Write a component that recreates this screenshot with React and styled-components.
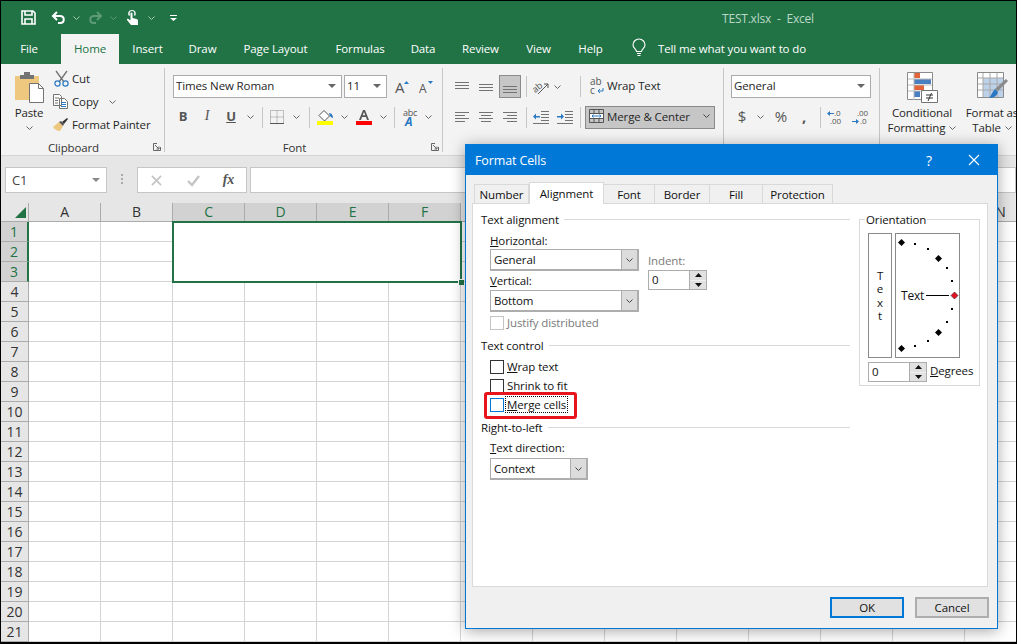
import React from "react";
import styled, { createGlobalStyle } from "styled-components";

const UI = `"Open Sans", "Noto Sans", "Liberation Sans", sans-serif`;
const GREEN = "#217346";
const BLUE = "#0078d7";

const Global = createGlobalStyle`
  html, body { margin: 0; padding: 0; background: #fff; }
  * { box-sizing: border-box; }
  svg { overflow: visible; }
`;

const Root = styled.div`
  position: relative;
  width: 1017px;
  height: 644px;
  overflow: hidden;
  border: 1px solid #000;
  border-bottom-width: 2px;
  font-family: ${UI};
  font-size: 11.5px;
  letter-spacing: -0.12px;
  color: #262626;
  background: #fff;
`;

/* title bar */
const TitleBar = styled.div`
  display: flex;
  align-items: center;
  height: 33px;
  padding-left: 20px;
  background: ${GREEN};
`;
const Qat = styled.div`
  display: flex;
  align-items: center;
  width: 701px;
  flex: none;
`;
const DocTitle = styled.div`
  margin-top: 1px;
  color: #bcd8c6;
  font-size: 12px;
  letter-spacing: -0.2px;
  white-space: pre;
`;
const Slot = styled.div`
  display: flex;
  align-items: center;
  justify-content: center;
  flex: none;
  width: ${(p) => p.$w}px;
  height: ${(p) => p.$h || 24}px;
  margin-left: ${(p) => p.$ml || 0}px;
`;

/* tabs */
const TabBar = styled.div`
  display: flex;
  align-items: stretch;
  height: 30px;
  background: ${GREEN};
`;
const Tab = styled.div`
  display: flex;
  align-items: center;
  justify-content: center;
  flex: none;
  width: ${(p) => p.$w}px;
  padding: 0 ${(p) => p.$pr || 0}px 2px 0;
  color: ${(p) => (p.$active ? GREEN : "#fff")};
  background: ${(p) => (p.$active ? "#f3f3f3" : "transparent")};
  white-space: nowrap;
`;
const TellMe = styled.div`
  display: flex;
  align-items: center;
  margin-left: 15px;
  padding-bottom: 2px;
  gap: 12px;
  color: #fff;
`;

/* ribbon */
const Ribbon = styled.div`
  display: flex;
  height: 92px;
  padding-top: 4px;
  background: #f3f3f3;
  border-bottom: 1px solid #d4d4d4;
`;
const Group = styled.div`
  display: flex;
  flex-direction: column;
  flex: none;
  width: ${(p) => p.$w}px;
  height: 84px;
  border-right: ${(p) => (p.$last ? "none" : "1px solid #c6c6c6")};
`;
const GroupBody = styled.div`
  display: flex;
  flex-direction: ${(p) => (p.$row ? "row" : "column")};
  height: 72px;
  padding: ${(p) => (p.$pad ? `7px 0 0 ${p.$pad}px` : "0")};
`;
const GroupLabel = styled.div`
  display: flex;
  align-items: center;
  height: 16px;
  margin: -1px 0 -3px;
`;
const LabelText = styled.div`
  flex: 1;
  text-align: center;
  color: #333;
`;
const Launcher = styled.div`
  display: flex;
  justify-content: flex-end;
  width: 18px;
  padding-right: 3px;
`;
const Row = styled.div`
  display: flex;
  align-items: center;
  height: ${(p) => p.$h || 24}px;
  margin-top: ${(p) => p.$mt || 0}px;
`;
const PasteCol = styled.div`
  display: flex;
  flex-direction: column;
  align-items: center;
  width: 56px;
  margin-right: -4px;
  padding-top: 4px;
  flex: none;
`;
const PasteText = styled.div`
  margin-top: 1px;
  line-height: 18px;
`;
const ClipList = styled.div`
  display: flex;
  flex-direction: column;
  margin-top: -1px;
`;
const ClipItem = styled.div`
  display: flex;
  align-items: center;
  gap: 3px;
  height: 23px;
  white-space: nowrap;
`;
const ClipIcon = styled.div`
  display: flex;
  justify-content: center;
  width: 16px;
  flex: none;
`;
const Combo = styled.div`
  display: flex;
  align-items: center;
  justify-content: space-between;
  flex: none;
  width: ${(p) => p.$w}px;
  height: 23px;
  margin-left: ${(p) => p.$ml || 0}px;
  padding: 0 5px 2px 2px;
  background: #fff;
  border: 1px solid #ababab;
  white-space: nowrap;
`;
const Caret = styled.div`
  width: 0;
  height: 0;
  border-left: 4px solid transparent;
  border-right: 4px solid transparent;
  border-top: 4px solid ${(p) => p.$c || "#666"};
`;
const VSep = styled.div`
  flex: none;
  width: 1px;
  height: 21px;
  margin-left: ${(p) => p.$ml || 0}px;
  background: #c6c6c6;
`;
const ActiveCell = styled(Slot)`
  height: 23px;
  background: #c6c6c6;
  border: 1px solid #8a8a8a;
`;
const WrapBtn = styled.div`
  display: flex;
  align-items: center;
  gap: 2px;
  margin-left: 9px;
  padding-bottom: 2px;
  white-space: nowrap;
`;
const MergeBtn = styled.div`
  display: flex;
  align-items: center;
  gap: 3px;
  width: 130px;
  height: 23px;
  margin-left: 4px;
  padding: 0 0 2px 3px;
  background: #c6c6c6;
  border: 1px solid #8a8a8a;
  white-space: nowrap;
`;
const StyleBtn = styled.div`
  display: flex;
  flex-direction: column;
  align-items: center;
  flex: none;
  width: ${(p) => p.$w}px;
  padding-top: 4px;
  line-height: 15px;
  white-space: nowrap;
`;
const StyleIcon = styled.div`
  height: 33px;
`;
const StyleLine = styled.div`
  display: flex;
  align-items: center;
  gap: 4px;
`;

/* formula bar */
const FormulaBar = styled.div`
  display: flex;
  align-items: flex-start;
  height: 47px;
  padding: 11px 0 0 4px;
  background: #e6e6e6;
`;
const NameBox = styled.div`
  display: flex;
  align-items: center;
  justify-content: space-between;
  flex: none;
  width: 102px;
  height: 26px;
  padding: 0 6px;
  background: #fff;
  border: 1px solid #c6c6c6;
  font-size: 13px;
  color: #444;
`;
const Grip = styled.div`
  flex: none;
  width: 2px;
  height: 12px;
  margin: 7px 14px 0 14px;
  background-image: linear-gradient(#aaa 50%, transparent 50%);
  background-size: 2px 4px;
`;
const FxBox = styled.div`
  display: flex;
  align-items: center;
  flex: none;
  width: 110px;
  height: 26px;
  background: #fff;
  border: 1px solid #c6c6c6;
`;
const FormulaInput = styled.div`
  flex: 1;
  height: 26px;
  margin-left: 3px;
  background: #fff;
  border: 1px solid #c6c6c6;
`;

/* sheet */
const Sheet = styled.div`
  position: relative;
  background: #fff;
`;
const HeadRow = styled.div`
  display: flex;
  height: 19px;
  background: #e6e6e6;
  border-bottom: 1px solid #ababab;
`;
const Corner = styled.div`
  display: flex;
  justify-content: flex-end;
  align-items: flex-end;
  flex: none;
  width: 28px;
  padding: 0 2px 3px 0;
  border-right: 1px solid #ababab;
`;
const ColHead = styled.div`
  flex: none;
  width: 72px;
  line-height: 18px;
  text-align: center;
  font-size: 14px;
  color: ${(p) => (p.$on ? GREEN : "#333")};
  background: ${(p) => (p.$on ? "#d2d2d2" : "transparent")};
  border-right: 1px solid #ababab;
`;
const SheetRow = styled.div`
  display: flex;
  height: 20px;
`;
const RowHead = styled.div`
  flex: none;
  width: 28px;
  line-height: 19px;
  text-align: center;
  font-size: 14px;
  color: ${(p) => (p.$on ? GREEN : "#333")};
  background: ${(p) => (p.$on ? "#d2d2d2" : "#e6e6e6")};
  border-right: ${(p) => (p.$on ? `2px solid ${GREEN}` : "1px solid #ababab")};
  border-bottom: 1px solid #ababab;
`;
const Cell = styled.div`
  flex: none;
  width: 72px;
  border-right: 1px solid #d4d4d4;
  border-bottom: 1px solid #d4d4d4;
`;
const Selection = styled.div`
  position: absolute;
  left: 171px;
  top: 18px;
  width: 290px;
  height: 62px;
  background: #fff;
  border: 2px solid ${GREEN};
`;
const Handle = styled.div`
  position: absolute;
  right: -4px;
  bottom: -4px;
  width: 6px;
  height: 6px;
  background: ${GREEN};
  border: 1px solid #fff;
  border-width: 1px 0 0 1px;
`;

/* dialog */
const Dialog = styled.div`
  position: absolute;
  left: 464px;
  top: 143px;
  width: 533px;
  height: 485px;
  display: flex;
  flex-direction: column;
  background: #f0f0f0;
  border: 1px solid ${BLUE};
  box-shadow: 0 2px 14px rgba(0, 0, 0, 0.35);
  color: #111;
`;
const DialogTitle = styled.div`
  display: flex;
  align-items: center;
  flex: none;
  height: 30px;
  padding: 0 17px 0 9px;
  background: ${BLUE};
  color: #fff;
  font-size: 12.5px;
`;
const HelpMark = styled.div`
  margin: 0 36px 0 auto;
  font-size: 14px;
`;
const TabStrip = styled.div`
  display: flex;
  align-items: flex-end;
  height: 22px;
  margin: 7px 0 0 8px;
  position: relative;
  z-index: 1;
`;
const DTab = styled.div`
  display: flex;
  align-items: center;
  justify-content: center;
  flex: none;
  width: ${(p) => p.$w}px;
  height: ${(p) => (p.$active ? 22 : 20)}px;
  background: ${(p) => (p.$active ? "#fff" : "#f0f0f0")};
  border: 1px solid #d9d9d9;
  border-left-width: ${(p) => (p.$first || p.$active ? 1 : 0)}px;
  border-bottom-width: ${(p) => (p.$active ? 0 : 1)}px;
`;
const Panel = styled.div`
  display: flex;
  flex: none;
  width: 516px;
  height: 384px;
  margin: -1px 0 0 6px;
  padding: 8px 0 0 8px;
  background: #fff;
  border: 1px solid #d9d9d9;
`;
const LeftCol = styled.div`
  flex: none;
  width: 369px;
`;
const Heading = styled.div`
  display: flex;
  align-items: center;
  gap: 5px;
  height: 16px;
  padding-bottom: 2px;
  margin-top: ${(p) => p.$mt || 0}px;
  white-space: nowrap;
  &::after {
    content: "";
    flex: 1;
    height: 1px;
    background: #d9d9d9;
  }
`;
const Indented = styled.div`
  padding-left: 9px;
`;
const FieldLabel = styled.div`
  height: 16px;
  line-height: 16px;
  margin-top: ${(p) => p.$mt || 0}px;
  color: ${(p) => (p.$muted ? "#7a7a7a" : "inherit")};
`;
const FieldRow = styled.div`
  display: flex;
  margin-top: 5px;
`;
const SelectCol = styled.div`
  flex: none;
  width: 149px;
`;
const IndentCol = styled.div`
  margin-left: 9px;
  padding-top: 20px;
`;
const Select = styled.div`
  display: flex;
  justify-content: space-between;
  width: ${(p) => p.$w}px;
  height: 22px;
  margin-top: ${(p) => p.$mt || 0}px;
  padding-left: 3px;
  line-height: 19px;
  background: #fff;
  border: 1px solid #adadad;
  border-width: 1px 2px 2px 1px;
`;
const SelectBtn = styled.div`
  display: flex;
  align-items: center;
  justify-content: center;
  width: 16px;
  background: #dcdcdc;
  border-left: 1px solid #adadad;
`;
const Spinner = styled.div`
  display: flex;
  justify-content: space-between;
  flex: none;
  width: ${(p) => p.$w || 59}px;
  height: 20px;
  margin-top: 1px;
  padding-left: 3px;
  line-height: 18px;
  background: #fff;
  border: 1px solid #adadad;
`;
const SpinBtns = styled.div`
  display: flex;
  flex-direction: column;
  width: 17px;
  background: #e1e1e1;
  border-left: 1px solid #adadad;
`;
const SpinBtn = styled.div`
  display: flex;
  align-items: center;
  justify-content: center;
  flex: 1;
  & + & {
    border-top: 1px solid #f0f0f0;
  }
`;
const CheckRow = styled.div`
  position: relative;
  display: flex;
  align-items: center;
  gap: 2px;
  height: 16px;
  margin-top: ${(p) => p.$mt || 0}px;
  color: ${(p) => (p.$muted ? "#7a7a7a" : "inherit")};
`;
const Box = styled.div`
  flex: none;
  width: 14px;
  height: 14px;
  background: #fff;
  border: 1px solid ${(p) => p.$c || "#333"};
`;
const CheckText = styled.div`
  margin-top: -2px;
  padding: 0 1px;
  outline: ${(p) => (p.$focus ? "1px dotted #111" : "none")};
`;
const RedMark = styled.div`
  position: absolute;
  left: -6px;
  top: -5px;
  width: 93px;
  height: 27px;
  border: 3px solid #e8141c;
  border-radius: 3px;
`;
const OrientGroup = styled.div`
  flex: none;
  width: 121px;
  height: 167px;
  margin: 7px 0 0 9px;
  padding: 0 8px;
  border: 1px solid #d9d9d9;
`;
const Legend = styled.div`
  width: fit-content;
  height: 14px;
  margin: -7px 0 0 -3px;
  padding: 0 1px;
  line-height: 14px;
  background: #fff;
`;
const OrientBoxes = styled.div`
  display: flex;
  gap: 3px;
  margin-top: 6px;
`;
const TextBox = styled.div`
  display: flex;
  flex-direction: column;
  align-items: center;
  justify-content: center;
  width: 24px;
  height: 125px;
  line-height: 13.4px;
  border: 1px solid #8a8a8a;
`;
const ArcBox = styled.div`
  width: 65px;
  height: 125px;
  border: 1px solid #8a8a8a;
`;
const DegreeRow = styled.div`
  display: flex;
  align-items: center;
  gap: 3px;
  margin-top: 3px;
  white-space: nowrap;
`;
const DegreeText = styled.span`
  margin-top: -2px;
`;
const Footer = styled.div`
  display: flex;
  justify-content: flex-end;
  gap: 11px;
  margin-top: 10px;
  padding-right: 8px;
`;
const DlgButton = styled.div`
  display: flex;
  align-items: center;
  justify-content: center;
  width: 74px;
  height: 21px;
  background: #e1e1e1;
  border: 2px solid ${(p) => (p.$primary ? BLUE : "#adadad")};
`;

/* icons */
const Chev = ({ c = "#666" }) => (
  <svg width="7" height="4" viewBox="0 0 7 4"><path d="M.5.5l3 3 3-3" fill="none" stroke={c} /></svg>
);
const Up = () => (
  <svg width="7" height="4" viewBox="0 0 7 4"><path d="M3.5 0L7 4H0z" fill="#111" /></svg>
);
const Down = () => (
  <svg width="7" height="4" viewBox="0 0 7 4"><path d="M3.5 4L7 0H0z" fill="#111" /></svg>
);
const SaveIcon = () => (
  <svg width="15" height="15" viewBox="0 0 15 15" fill="none" stroke="#fff" strokeWidth="1.6">
    <path d="M1 1h11l2 2v11H1z" />
    <path d="M4 1v4h7V1" />
    <path d="M4 14v-5h7v5" />
  </svg>
);
const UndoIcon = ({ c = "#fff", flip }) => (
  <svg width="15" height="13" viewBox="0 0 15 13" fill="none" stroke={c} strokeWidth="2" style={flip ? { transform: "scaleX(-1)" } : undefined}>
    <path d="M6 1L2 5l4 4" />
    <path d="M2 5h7c5 0 5 7 0 7H7" />
  </svg>
);
const TouchIcon = () => (
  <svg width="13" height="17" viewBox="0 0 13 17" fill="#fff">
    <path d="M3 7c-2-3 0-6 3-6s5 3 3 6l-1-1c1-2 0-4-2-4S3 4 4 6z" />
    <path d="M4.500 4.500a1 1 0 012 0V9l4 1c1 .3 1.500 1 1.500 2v4H5L1 11c-.5-.8.5-1.800 1.500-1l2 1.500z" />
  </svg>
);
const BulbIcon = () => (
  <svg width="14" height="18" viewBox="0 0 14 18" fill="none" stroke="#fff" strokeWidth="1.100">
    <path d="M4.500 12.500C4.300 10 1 9 1 6a6 6 0 0112 0c0 3-3.300 4-3.500 6.500z" />
    <path d="M5 14.500h4M5.500 16.500h3" />
  </svg>
);
const PasteIcon = () => (
  <svg width="29" height="31" viewBox="0 0 29 31">
    <path d="M0 4h24v24H0z" fill="#edc87e" />
    <path d="M5 3h4V0h6v3h4v4H5z" fill="#737373" />
    <path d="M14.500 11.500h9l5 5v14h-14z" fill="#fff" stroke="#737373" />
    <path d="M23.500 11.500v5h5" fill="none" stroke="#737373" />
  </svg>
);
const CutIcon = () => (
  <svg width="15" height="16" viewBox="0 0 15 16" fill="none">
    <path d="M2 0l8 11M13 0L5 11" stroke="#737373" strokeWidth="1.300" />
    <circle cx="3.500" cy="12.500" r="2.600" stroke="#2b79c2" strokeWidth="1.200" />
    <circle cx="11.500" cy="12.500" r="2.600" stroke="#2b79c2" strokeWidth="1.200" />
  </svg>
);
const CopyIcon = () => (
  <svg width="16" height="15" viewBox="0 0 16 15" fill="none" stroke="#737373">
    <path d="M.5.500h6l2 2v9H.5zM6.500 4.500h5l3 3v7h-8z" fill="#fff" />
    <path d="M2 4h4M2 6.500h3M2 9h3" />
    <path d="M8 8.500h5M8 10.500h5M8 12.500h5" stroke="#2b79c2" />
  </svg>
);
const PainterIcon = () => (
  <svg width="16" height="15" viewBox="0 0 16 15">
    <path d="M6 5l4 4-3 5c-3 0-6-2-7-4z" fill="#edc87e" />
    <path d="M6 5l2-1 3 3-1 2z" fill="#555" />
    <path d="M9 5l5-4 1 1-4 5z" fill="#333" />
  </svg>
);
const LauncherIcon = () => (
  <svg width="8" height="8" viewBox="0 0 8 8" fill="none" stroke="#666">
    <path d="M7.500 4v3.500H.5V.5H4" />
    <path d="M2 2l4 4M6 3.500V6H3.500" />
  </svg>
);
const GrowA = ({ small }) => (
  <svg width="14" height="14" viewBox="0 0 14 14">
    <text x="0" y={13} fontFamily={UI} fontSize={small ? 12 : 15} fill="#555">A</text>
    {small ? <path d="M9 1h5l-2.500 3z" fill="#2b79c2" /> : <path d="M9 4h5l-2.500-3z" fill="#2b79c2" />}
  </svg>
);
const BordersIcon = () => (
  <svg width="14" height="14" viewBox="0 0 14 14" fill="none">
    <path d="M.5.500h13v13H.5zM7 .5v13M.5 7h13" stroke="#8a8a8a" strokeDasharray="1 1" />
    <path d="M0 13.500h14" stroke="#555" />
  </svg>
);
const FillIcon = () => (
  <svg width="17" height="15" viewBox="0 0 17 15">
    <path d="M7 .5l5.500 5.500-5 5L2 5.500z" fill="#fff" stroke="#555" />
    <path d="M12 3c3 0 4 3 4 5-1 0-2-1-3-2z" fill="#2b79c2" />
    <path d="M0 11h16v4H0z" fill="#ffff00" />
  </svg>
);
const ColorA = () => (
  <svg width="16" height="15" viewBox="0 0 16 15">
    <path d="M3 10L7 0h2l4 10h-2l-1-3H6l-1 3zM6.700 5.300h2.600L8 2z" fill="#555" />
    <path d="M0 11h16v4H0z" fill="#ff0000" />
  </svg>
);
const AbcIcon = () => (
  <svg width="14" height="17" viewBox="0 0 14 17">
    <text x="0" y="7" fontFamily={UI} fontSize="9" letterSpacing="-.3" fill="#555">abc</text>
    <text x="2" y="17" fontFamily={UI} fontSize="12" fontWeight="700" fontStyle="italic" fill="#2b79c2">A</text>
  </svg>
);
const Lines = ({ rows, w = 14 }) => (
  <svg width={w} height="12" viewBox={`0 0 ${w} 12`} stroke="#737373">
    {rows.map(([y, x1, x2]) => (
      <path key={y} d={`M${x1} ${y + 0.5}H${x2}`} />
    ))}
  </svg>
);
const OrientIcon = () => (
  <svg width="17" height="17" viewBox="0 0 17 17" fill="none">
    <text x="0" y="12" fontFamily={UI} fontSize="9" fill="#555" transform="rotate(-40 6 9)">ab</text>
    <path d="M6 16L16 6M16 6h-4M16 6v4" stroke="#555" />
  </svg>
);
const WrapIcon = () => (
  <svg width="15" height="18" viewBox="0 0 15 18" fill="none">
    <text x="0" y="8" fontFamily={UI} fontSize="10" fill="#555">ab</text>
    <text x="0" y="17" fontFamily={UI} fontSize="10" fill="#555">c</text>
    <path d="M13 11v3H8M10 12l-2 2 2 2" stroke="#2b79c2" />
  </svg>
);
const IndentIcon = ({ right }) => (
  <svg width="16" height="13" viewBox="0 0 16 13" fill="none">
    <path d="M8 .5h8M8 3.500h8M8 6.500h8M8 9.500h8M0 12.500h16" stroke="#737373" />
    <path d={right ? "M0 5h4V2.500L7 5.500l-3 3V6.500H0z" : "M7 5H3V2.500L0 5.500l3 3V6.500h4z"} fill="#2b79c2" />
  </svg>
);
const MergeIcon = () => (
  <svg width="15" height="14" viewBox="0 0 15 14" fill="none">
    <path d="M.5.500h14v13H.5zM.5 4.500h14M.5 9.500h14M5 .5v4M10 .5v4M5 9.500v4M10 9.500v4" stroke="#555" />
    <path d="M1 5h13v4H1z" fill="#fff" />
    <path d="M3 7h9M4.500 5.500L3 7l1.500 1.500M10.500 5.500L12 7l-1.500 1.500" stroke="#2b79c2" />
  </svg>
);
const DecimalIcon = ({ more }) => (
  <svg width="16" height="15" viewBox="0 0 16 15" fontFamily={UI} fontSize="8" fill="#555">
    {more ? (
      <>
        <text x="5" y="6">.00</text>
        <text x="8" y="14">.0</text>
        <path d="M0 11h4V9l3 2.500L4 14v-2H0z" fill="#2b79c2" />
      </>
    ) : (
      <>
        <text x="7" y="6">.0</text>
        <text x="3" y="14">.00</text>
        <path d="M7 3H3V1L0 3.500 3 6V4h4z" fill="#2b79c2" />
      </>
    )}
  </svg>
);
const CondIcon = () => (
  <svg width="31" height="31" viewBox="0 0 31 31">
    <path d="M.5.500h25v27H.5z" fill="#fff" stroke="#8a8a8a" />
    <path d="M7 1h6v5H7z" fill="#e0633a" />
    <path d="M7 7h17v5H7z" fill="#4a7fc0" />
    <path d="M7 13h10v5H7z" fill="#e0633a" />
    <path d="M7 19h6v6H7z" fill="#4a7fc0" />
    <path d="M7 1v27M1 7h24M1 13h24M1 19h24" stroke="#bbb" fill="none" />
    <path d="M14.500 18.500h16v12h-16z" fill="#fff" stroke="#737373" />
    <path d="M19 23h7M19 26h7M24.500 21l-3.500 8" stroke="#333" fill="none" />
  </svg>
);
const TableIcon = () => (
  <svg width="31" height="31" viewBox="0 0 31 31">
    <path d="M.5.500h26v25H.5z" fill="#fff" stroke="#8a8a8a" />
    <path d="M6 6h20v19H6z" fill="#bcd2ea" />
    <path d="M6 1v24M13 1v24M20 1v24M1 6h25M1 12h25M1 18h25" stroke="#a8a8a8" fill="none" />
    <path d="M29 7l2 2-10 10-3-2z" fill="#8a8a8a" />
    <path d="M18 17l3 3c-1 5-6 6-9 6 2-2 3-6 6-9z" fill="#2b79c2" />
  </svg>
);
const CloseX = ({ c = "#fff", s = 12, w = 1.2 }) => (
  <svg width={s} height={s} viewBox="0 0 12 12"><path d="M1 1l10 10M11 1L1 11" stroke={c} strokeWidth={w} fill="none" /></svg>
);
const CheckMark = () => (
  <svg width="13" height="11" viewBox="0 0 13 11"><path d="M1 6l4 4 7-9" stroke="#c4c4c4" strokeWidth="2.400" fill="none" /></svg>
);
const CornerMark = () => (
  <svg width="11" height="11" viewBox="0 0 11 11"><path d="M11 0v11H0z" fill={GREEN} /></svg>
);
const Fx = styled.span`
  font-family: "Liberation Serif", serif;
  font-style: italic;
  font-weight: 700;
  font-size: 14px;
  color: #555;
`;
const Chip = styled.div`
  margin-top: -2px;
  font-weight: ${(p) => (p.$b ? 700 : 400)};
  font-style: ${(p) => (p.$i ? "italic" : "normal")};
  text-decoration: ${(p) => (p.$u ? "underline" : "none")};
  font-family: ${(p) => (p.$serif ? `"Liberation Serif", serif` : "inherit")};
  font-size: ${(p) => p.$s || 12}px;
  color: #555;
`;

const Orientation = () => {
  const big = [[5.5, 8.5], [42.5, 24.5], [5.5, 114.5], [42.5, 98.5]];
  const small = [[19, 10], [32, 15], [51, 34], [56, 47], [56, 75], [51, 88], [32, 107], [19, 112]];
  const dia = (x, y, r) => `M${x} ${y - r}L${x + r} ${y}L${x} ${y + r}L${x - r} ${y}z`;
  return (
    <svg width="63" height="123" viewBox="0 0 63 123">
      {big.map(([x, y]) => <path key={`${x}-${y}`} d={dia(x, y, 3.5)} fill="#000" />)}
      {small.map(([x, y]) => <rect key={`${x}-${y}`} x={x - 1} y={y - 1} width="2" height="2" fill="#000" />)}
      <text x="5" y="66" fontFamily={UI} fontSize="12" letterSpacing="-.2" fill="#111">Text</text>
      <path d="M30 61.500h23" stroke="#000" />
      <path d={dia(58.500, 61.500, 3.500)} fill="#e81123" stroke="#222" strokeWidth=".6" />
    </svg>
  );
};

const SpinBox = ({ w }) => (
  <Spinner $w={w}>
    0
    <SpinBtns>
      <SpinBtn><Up /></SpinBtn>
      <SpinBtn><Down /></SpinBtn>
    </SpinBtns>
  </Spinner>
);

const DropField = ({ w, mt, children }) => (
  <Select $w={w} $mt={mt}>
    {children}
    <SelectBtn><Chev c="#444" /></SelectBtn>
  </Select>
);

const COLS = "ABCDEFGHIJKLMN".split("");
// G to M sit under the dialog
const UNDER_DIALOG = "GHIJKLM";
const ROWS = Array.from({ length: 21 }, (_, i) => i + 1);
const TABS = [
  ["File", 60, false, 4], ["Home", 58, true], ["Insert", 57], ["Draw", 53], ["Page Layout", 93], ["Formulas", 76],
  ["Data", 50], ["Review", 65], ["View", 51], ["Help", 53],
];
const DTABS = [["Number", 55], ["Alignment", 75, true], ["Font", 51], ["Border", 55], ["Fill", 53], ["Protection", 70]];

export default function App() {
  return (
    <Root>
      <Global />
      <TitleBar>
        <Qat>
          <SaveIcon />
          <Slot $w={15} $ml={15}><UndoIcon /></Slot>
          <Slot $w={8} $ml={6}><Chev c="#a9cbb6" /></Slot>
          <Slot $w={15} $ml={8}><UndoIcon c="#5d9a76" flip /></Slot>
          <Slot $w={8} $ml={6}><Chev c="#5d9a76" /></Slot>
          <Slot $w={14} $ml={8}><TouchIcon /></Slot>
          <Slot $w={8} $ml={8}><Chev c="#a9cbb6" /></Slot>
          <Slot $w={8} $ml={14}>
            <svg width="7" height="6" viewBox="0 0 7 6" fill="#fff"><path d="M0 0h7v1H0zM0 3h7L3.500 6z" /></svg>
          </Slot>
        </Qat>
        <DocTitle>TEST.xlsx  -  Excel</DocTitle>
      </TitleBar>

      <TabBar>
        {TABS.map(([t, w, on, pr]) => <Tab key={t} $w={w} $active={on} $pr={pr}>{t}</Tab>)}
        <TellMe><BulbIcon />Tell me what you want to do</TellMe>
      </TabBar>

      <Ribbon>
        <Group $w={164}>
          <GroupBody $row>
            <PasteCol>
              <PasteIcon />
              <PasteText>Paste</PasteText>
              <Slot $w={8} $h={12}><Chev /></Slot>
            </PasteCol>
            <ClipList>
              <ClipItem><ClipIcon><CutIcon /></ClipIcon>Cut</ClipItem>
              <ClipItem><ClipIcon><CopyIcon /></ClipIcon>Copy<Slot $w={8} $ml={7}><Chev /></Slot></ClipItem>
              <ClipItem><ClipIcon><PainterIcon /></ClipIcon>Format Painter</ClipItem>
            </ClipList>
          </GroupBody>
          <GroupLabel><LabelText>Clipboard</LabelText><Launcher><LauncherIcon /></Launcher></GroupLabel>
        </Group>

        <Group $w={278}>
          <GroupBody $pad={8}>
            <Row $h={23}>
              <Combo $w={169}>Times New Roman<Caret /></Combo>
              <Combo $w={43} $ml={2}>11<Caret /></Combo>
              <Slot $w={14} $ml={8}><GrowA /></Slot>
              <Slot $w={14} $ml={10}><GrowA small /></Slot>
            </Row>
            <Row $mt={7}>
              <Slot $w={20}><Chip $b $s={13}>B</Chip></Slot>
              <Slot $w={28}><Chip $i $serif $s={14}>I</Chip></Slot>
              <Slot $w={20}><Chip $u $b $s={13}>U</Chip></Slot>
              <Slot $w={18}><Chev /></Slot>
              <VSep $ml={3} />
              <Slot $w={28}><BordersIcon /></Slot>
              <Slot $w={10}><Chev /></Slot>
              <VSep $ml={8} />
              <Slot $w={30}><FillIcon /></Slot>
              <Slot $w={8}><Chev /></Slot>
              <Slot $w={32}><ColorA /></Slot>
              <Slot $w={6}><Chev /></Slot>
              <VSep $ml={8} />
              <Slot $w={30}><AbcIcon /></Slot>
              <Slot $w={8} $ml={-1}><Chev /></Slot>
            </Row>
          </GroupBody>
          <GroupLabel><LabelText>Font</LabelText><Launcher><LauncherIcon /></Launcher></GroupLabel>
        </Group>

        <Group $w={281}>
          <GroupBody $pad={6}>
            <Row $h={23}>
              <Slot $w={26}><Lines rows={[[1, 0, 14], [4, 0, 14], [7, 0, 14]]} /></Slot>
              <Slot $w={22}><Lines rows={[[3, 0, 14], [6, 0, 14], [9, 0, 14]]} /></Slot>
              <ActiveCell $w={22} $ml={2}><Lines rows={[[5, 0, 14], [8, 0, 14], [11, 0, 14]]} /></ActiveCell>
              <VSep $ml={5} />
              <Slot $w={26}><OrientIcon /></Slot>
              <Slot $w={8}><Chev /></Slot>
              <VSep $ml={19} />
              <WrapBtn><WrapIcon />Wrap Text</WrapBtn>
            </Row>
            <Row $mt={7}>
              <Slot $w={26}><Lines rows={[[1, 0, 14], [4, 0, 10], [7, 0, 14], [10, 0, 10]]} /></Slot>
              <Slot $w={22}><Lines rows={[[1, 0, 14], [4, 2, 12], [7, 0, 14], [10, 2, 12]]} /></Slot>
              <Slot $w={26}><Lines rows={[[1, 0, 14], [4, 4, 14], [7, 0, 14], [10, 4, 14]]} /></Slot>
              <VSep $ml={3} />
              <Slot $w={28}><IndentIcon /></Slot>
              <Slot $w={20}><IndentIcon right /></Slot>
              <VSep $ml={5} />
              <MergeBtn><MergeIcon />Merge &amp; Center<Slot $w={8} $ml={10}><Chev c="#444" /></Slot></MergeBtn>
            </Row>
          </GroupBody>
        </Group>

        <Group $w={156}>
          <GroupBody $pad={7}>
            <Row $h={23}>
              <Combo $w={140}>General<Caret /></Combo>
            </Row>
            <Row $mt={7}>
              <Slot $w={22}><Chip $s={15}>$</Chip></Slot>
              <Slot $w={14}><Chev /></Slot>
              <Slot $w={28}><Chip $s={15}>%</Chip></Slot>
              <Slot $w={18}><Chip $b $s={15}>,</Chip></Slot>
              <VSep $ml={7} />
              <Slot $w={28}><DecimalIcon /></Slot>
              <Slot $w={21}><DecimalIcon more /></Slot>
            </Row>
          </GroupBody>
        </Group>

        <Group $w={138} $last>
          <GroupBody $row>
            <StyleBtn $w={84}>
              <StyleIcon><CondIcon /></StyleIcon>
              Conditional
              <StyleLine>Formatting<Chev /></StyleLine>
            </StyleBtn>
            <StyleBtn $w={56}>
              <StyleIcon><TableIcon /></StyleIcon>
              Format as
              <StyleLine>Table<Chev /></StyleLine>
            </StyleBtn>
          </GroupBody>
        </Group>
      </Ribbon>

      <FormulaBar>
        <NameBox>C1<Caret $c="#888" /></NameBox>
        <Grip />
        <FxBox>
          <Slot $w={36}><CloseX c="#c4c4c4" s={11} w={1.800} /></Slot>
          <Slot $w={38}><CheckMark /></Slot>
          <Slot $w={33}><Fx>fx</Fx></Slot>
        </FxBox>
        <FormulaInput />
      </FormulaBar>

      <Sheet>
        <HeadRow>
          <Corner><CornerMark /></Corner>
          {COLS.map((c) => (
            <ColHead key={c} $on={"CDEF".includes(c)}>{UNDER_DIALOG.includes(c) ? "" : c}</ColHead>
          ))}
        </HeadRow>
        {ROWS.map((r) => (
          <SheetRow key={r}>
            <RowHead $on={r <= 3}>{r}</RowHead>
            {COLS.map((c) => <Cell key={c} />)}
          </SheetRow>
        ))}
        <Selection><Handle /></Selection>
      </Sheet>

      <Dialog>
        <DialogTitle>
          Format Cells
          <HelpMark>?</HelpMark>
          <Slot $w={12}><CloseX /></Slot>
        </DialogTitle>
        <TabStrip>
          {DTABS.map(([t, w, on], i) => <DTab key={t} $w={w} $active={on} $first={i === 0}>{t}</DTab>)}
        </TabStrip>
        <Panel>
          <LeftCol>
            <Heading>Text alignment</Heading>
            <Indented>
              <FieldRow>
                <SelectCol>
                  <FieldLabel><u>H</u>orizontal:</FieldLabel>
                  <DropField w={149}>General</DropField>
                  <FieldLabel $mt={2}><u>V</u>ertical:</FieldLabel>
                  <DropField w={149} mt={1}>Bottom</DropField>
                </SelectCol>
                <IndentCol>
                  <FieldLabel $muted>Indent:</FieldLabel>
                  <SpinBox />
                </IndentCol>
              </FieldRow>
              <CheckRow $mt={3} $muted><Box $c="#c4c4c4" /><CheckText>Justify distributed</CheckText></CheckRow>
            </Indented>
            <Heading $mt={7}>Text control</Heading>
            <Indented>
              <CheckRow $mt={5}><Box /><CheckText><u>W</u>rap text</CheckText></CheckRow>
              <CheckRow $mt={3}><Box /><CheckText>Shrink to fit</CheckText></CheckRow>
              <CheckRow $mt={3}>
                <Box $c={BLUE} />
                <CheckText $focus><u>M</u>erge cells</CheckText>
                <RedMark />
              </CheckRow>
            </Indented>
            <Heading $mt={7}>Right-to-left</Heading>
            <Indented>
              <FieldLabel $mt={4}><u>T</u>ext direction:</FieldLabel>
              <DropField w={98} mt={2}>Context</DropField>
            </Indented>
          </LeftCol>
          <OrientGroup>
            <Legend>Orientation</Legend>
            <OrientBoxes>
              <TextBox><span>T</span><span>e</span><span>x</span><span>t</span></TextBox>
              <ArcBox><Orientation /></ArcBox>
            </OrientBoxes>
            <DegreeRow><SpinBox w={59} /><DegreeText><u>D</u>egrees</DegreeText></DegreeRow>
          </OrientGroup>
        </Panel>
        <Footer>
          <DlgButton $primary>OK</DlgButton>
          <DlgButton>Cancel</DlgButton>
        </Footer>
      </Dialog>
    </Root>
  );
}
